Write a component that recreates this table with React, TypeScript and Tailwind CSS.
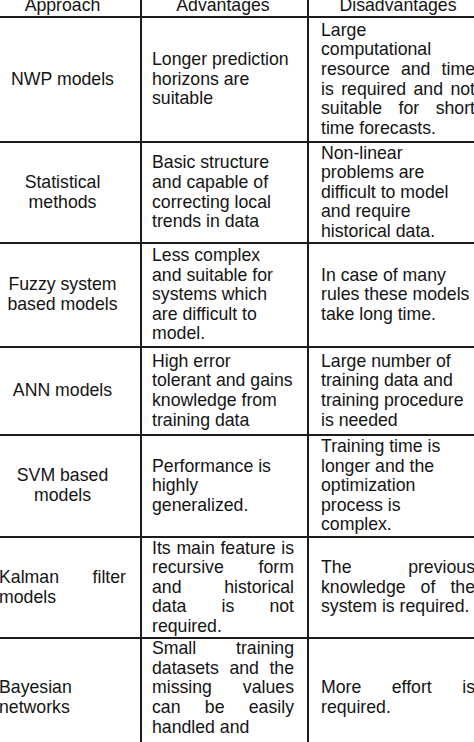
import React from "react";

type Align = "c" | "l" | "j";
type Line = [string, Align];

interface Row {
  height: string;
  cells: [Line[], Line[], Line[]];
}

const c = (t: string): Line => [t, "c"];
const l = (t: string): Line => [t, "l"];
const j = (t: string): Line => [t, "j"];

const rows: Row[] = [
  {
    height: "h-[125px]",
    cells: [
      [c("NWP models")],
      [l("Longer prediction"), l("horizons are"), l("suitable")],
      [
        l("Large"),
        l("computational"),
        j("resource and time"),
        j("is required and not"),
        j("suitable for short"),
        l("time forecasts."),
      ],
    ],
  },
  {
    height: "h-[101px]",
    cells: [
      [c("Statistical"), c("methods")],
      [l("Basic structure"), l("and capable of"), l("correcting local"), l("trends in data")],
      [l("Non-linear"), l("problems are"), l("difficult to model"), l("and require"), l("historical data.")],
    ],
  },
  {
    height: "h-[104px]",
    cells: [
      [c("Fuzzy system"), c("based models")],
      [l("Less complex"), l("and suitable for"), l("systems which"), l("are difficult to"), l("model.")],
      [l("In case of many"), l("rules these models"), l("take long time.")],
    ],
  },
  {
    height: "h-[88px]",
    cells: [
      [c("ANN models")],
      [l("High error"), l("tolerant and gains"), l("knowledge from"), l("training data")],
      [l("Large number of"), l("training data and"), l("training procedure"), l("is needed")],
    ],
  },
  {
    height: "h-[102px]",
    cells: [
      [c("SVM based"), c("models")],
      [l("Performance is"), l("highly"), l("generalized.")],
      [l("Training time is"), l("longer and the"), l("optimization"), l("process is"), l("complex.")],
    ],
  },
  {
    height: "h-[101px]",
    cells: [
      [j("Kalman filter"), l("models")],
      [j("Its main feature is"), j("recursive form"), j("and historical"), j("data is not"), l("required.")],
      [j("The previous"), j("knowledge of the"), l("system is required.")],
    ],
  },
  {
    height: "h-[120px]",
    cells: [
      [l("Bayesian"), l("networks")],
      [j("Small training"), j("datasets and the"), j("missing values"), j("can be easily"), l("handled and"), l("")],
      [j("More effort is"), l("required.")],
    ],
  },
];

const colClass = [
  "w-[154px] pl-[11px] pr-[14px]",
  "w-[167px] pl-[10px] pr-[13px]",
  "w-[175px] pl-[12px] pr-[7px]",
];

function LineView({ line }: { line: Line }) {
  const [text, align] = line;
  const cls =
    align === "c"
      ? "text-center"
      : align === "j"
        ? "text-justify [text-align-last:justify]"
        : "text-left";
  return <div className={`whitespace-nowrap h-[19.6px] ${cls}`}>{text || "\u00a0"}</div>;
}

export default function App() {
  return (
    <div className="w-[474px] h-[742px] overflow-hidden bg-white text-[#141414] font-['Liberation_Sans',Arial,sans-serif] text-[17.7px] leading-[19.6px]">
      <div className="ml-[-14px] mt-[-6px] w-[498px] border-l-2 border-t-2 border-[#1c1c1c]">
        <div className="flex h-[22px] border-b-2 border-[#1c1c1c]">
          {["Approach", "Advantages", "Disadvantages"].map((h, i) => (
            <div
              key={h}
              className={`${colClass[i]} border-r-2 border-[#1c1c1c] text-center whitespace-nowrap`}
            >
              {h}
            </div>
          ))}
        </div>
        {rows.map((row, ri) => (
          <div key={ri} className={`flex ${row.height} border-b-2 border-[#1c1c1c]`}>
            {row.cells.map((cell, ci) => (
              <div
                key={ci}
                className={`${colClass[ci]} flex flex-col justify-center border-r-2 border-[#1c1c1c]`}
              >
                {cell.map((line, li) => (
                  <LineView key={li} line={line} />
                ))}
              </div>
            ))}
          </div>
        ))}
      </div>
    </div>
  );
}
